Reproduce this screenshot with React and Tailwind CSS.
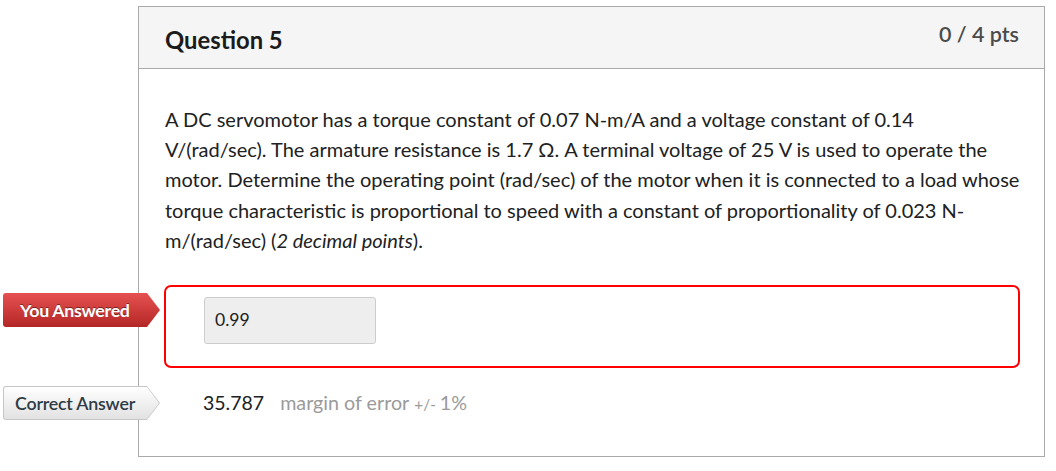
const font = { fontFamily: 'Lato, "Open Sans", sans-serif' }

function Tag({ children, variant }) {
  if (variant === 'wrong') {
    return (
      <div
        className="absolute left-[-163px] top-[6px] flex h-[34px] w-[157px] items-center rounded-l-[3px] bg-gradient-to-b from-[#e65151] to-[#b42525] pl-[17px] text-[17.8px] font-bold tracking-[-0.3px] text-white [clip-path:polygon(0_0,144px_0,157px_50%,144px_100%,0_100%)] [text-shadow:0_-1px_0_rgba(0,0,0,0.45)]"
      >
        {children}
      </div>
    )
  }
  return (
    <div className="absolute left-[-161px] top-[-17px] h-[34px] w-[157px] rounded-l-[3px] bg-[#c6c6c6] [clip-path:polygon(0_0,144px_0,157px_50%,144px_100%,0_100%)]">
      <div className="absolute inset-[1px] flex items-center rounded-l-[2px] bg-gradient-to-b from-[#ffffff] to-[#e2e2e2] pl-[11px] text-[17.8px] font-semibold tracking-[-0.2px] text-[#2d3b45] [clip-path:polygon(0_0,143px_0,155px_50%,143px_100%,0_100%)]">
        {children}
      </div>
    </div>
  )
}

export default function App() {
  return (
    <div className="h-[471px] w-[1056px] bg-white pl-[138px] pt-[6px]" style={font}>
      <div className="w-[907px] border border-[#aaaaaa] bg-white">
        <div className="flex h-[62px] items-start justify-between border-b border-[#aaaaaa] bg-[#f5f5f5] pl-[26px] pr-[25px]">
          <h2 className="pt-[17px] text-[23.8px] font-bold leading-[32px] text-[#1b1b1b]">Question 5</h2>
          <div className="pt-[13px] text-[21.5px] font-semibold leading-[28px] text-[#4b4b4b]">0 / 4 pts</div>
        </div>

        <div className="pl-[26px] pr-[22px] pt-[35px]">
          <p className="text-[20px] leading-[30.2px] text-[#202122]">
            A DC servomotor has a torque constant of 0.07 N-m/A and a voltage constant of 0.14
            <br />
            V/(rad/sec). The armature resistance is 1.7 Ω. A terminal voltage of 25 V is used to operate the motor. Determine the operating point (rad/sec) of the motor when it is connected to a load whose torque characteristic is proportional to speed with a constant of proportionality of 0.023 N-m/(rad/sec) (<em>2 decimal points</em>).
          </p>
        </div>

        <div className="relative ml-[25px] mr-[24px] mt-[30px] h-[83px] rounded-[7px] border-2 border-[#ff0000] pl-[38px] pt-[10px]">
          <Tag variant="wrong">You Answered</Tag>
          <div className="flex h-[47px] w-[172px] items-center rounded-[3px] border border-[#cccccc] bg-[#eeeeee] pl-[10px] text-[17.6px] text-[#202122]">
            0.99
          </div>
        </div>

        <div className="relative ml-[25px] mt-[35px] flex h-0 items-center pb-[53px]">
          <Tag variant="right">Correct Answer</Tag>
          <div className="absolute left-[39px] top-[-14px] flex items-baseline whitespace-nowrap">
            <span className="text-[19.5px] leading-[28px] text-[#202122]">35.787</span>
            <span className="ml-[16px] text-[19.7px] leading-[28px] text-[#9a9a9a]">margin of error</span>
            <span className="ml-[5px] text-[15.4px] text-[#9a9a9a]">+/-</span>
            <span className="ml-[4px] text-[19.7px] leading-[28px] text-[#9a9a9a]">1%</span>
          </div>
        </div>
      </div>
    </div>
  )
}
